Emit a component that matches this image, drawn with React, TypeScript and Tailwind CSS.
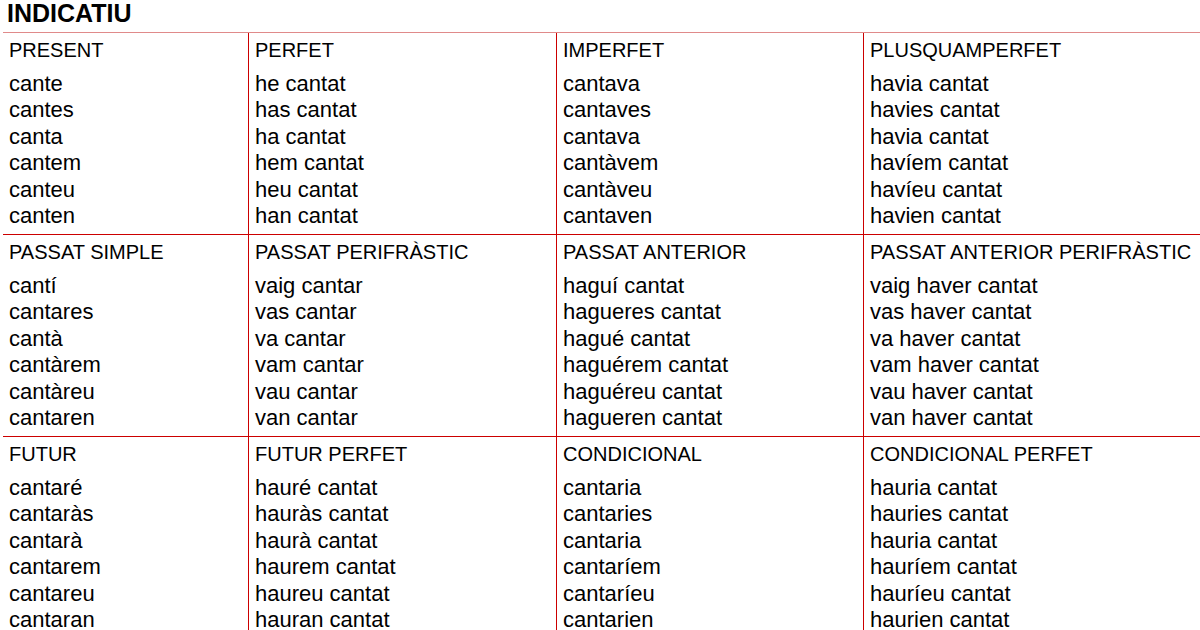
const rows: { title: string; forms: string[] }[][] = [
  [
    { title: "PRESENT", forms: ["cante", "cantes", "canta", "cantem", "canteu", "canten"] },
    { title: "PERFET", forms: ["he cantat", "has cantat", "ha cantat", "hem cantat", "heu cantat", "han cantat"] },
    { title: "IMPERFET", forms: ["cantava", "cantaves", "cantava", "cantàvem", "cantàveu", "cantaven"] },
    { title: "PLUSQUAMPERFET", forms: ["havia cantat", "havies cantat", "havia cantat", "havíem cantat", "havíeu cantat", "havien cantat"] },
  ],
  [
    { title: "PASSAT SIMPLE", forms: ["cantí", "cantares", "cantà", "cantàrem", "cantàreu", "cantaren"] },
    { title: "PASSAT PERIFRÀSTIC", forms: ["vaig cantar", "vas cantar", "va cantar", "vam cantar", "vau cantar", "van cantar"] },
    { title: "PASSAT ANTERIOR", forms: ["haguí cantat", "hagueres cantat", "hagué cantat", "haguérem cantat", "haguéreu cantat", "hagueren cantat"] },
    { title: "PASSAT ANTERIOR PERIFRÀSTIC", forms: ["vaig haver cantat", "vas haver cantat", "va haver cantat", "vam haver cantat", "vau haver cantat", "van haver cantat"] },
  ],
  [
    { title: "FUTUR", forms: ["cantaré", "cantaràs", "cantarà", "cantarem", "cantareu", "cantaran"] },
    { title: "FUTUR PERFET", forms: ["hauré cantat", "hauràs cantat", "haurà cantat", "haurem cantat", "haureu cantat", "hauran cantat"] },
    { title: "CONDICIONAL", forms: ["cantaria", "cantaries", "cantaria", "cantaríem", "cantaríeu", "cantarien"] },
    { title: "CONDICIONAL PERFET", forms: ["hauria cantat", "hauries cantat", "hauria cantat", "hauríem cantat", "hauríeu cantat", "haurien cantat"] },
  ],
];

export default function App() {
  return (
    <div
      className="h-[630px] w-[1200px] overflow-hidden bg-white text-black"
      style={{ fontFamily: '"Liberation Sans", Arial, sans-serif' }}
    >
      <h1 className="ml-[7px] h-[26px] text-[25px] font-bold leading-[26px]">INDICATIU</h1>
      <div className="ml-[3px] mt-[6px] w-[1300px]">
        {rows.map((row, i) => (
          <div
            key={i}
            className={`grid h-[202px] grid-cols-[245px_308px_307px_440px] border-t ${
              i === 0 ? "border-[#e08a8a]" : "border-[#cc0000]"
            }`}
          >
            {row.map((cell, j) => (
              <div
                key={j}
                className={`px-[6px] pt-[5px] ${j > 0 ? "border-l border-[#cc0000]" : ""}`}
              >
                <div className="whitespace-nowrap text-[20px] leading-[24px]">{cell.title}</div>
                <div className="mt-[9px]">
                  {cell.forms.map((f, k) => (
                    <div key={k} className="whitespace-nowrap text-[22px] leading-[26.4px]">
                      {f}
                    </div>
                  ))}
                </div>
              </div>
            ))}
          </div>
        ))}
      </div>
    </div>
  );
}
